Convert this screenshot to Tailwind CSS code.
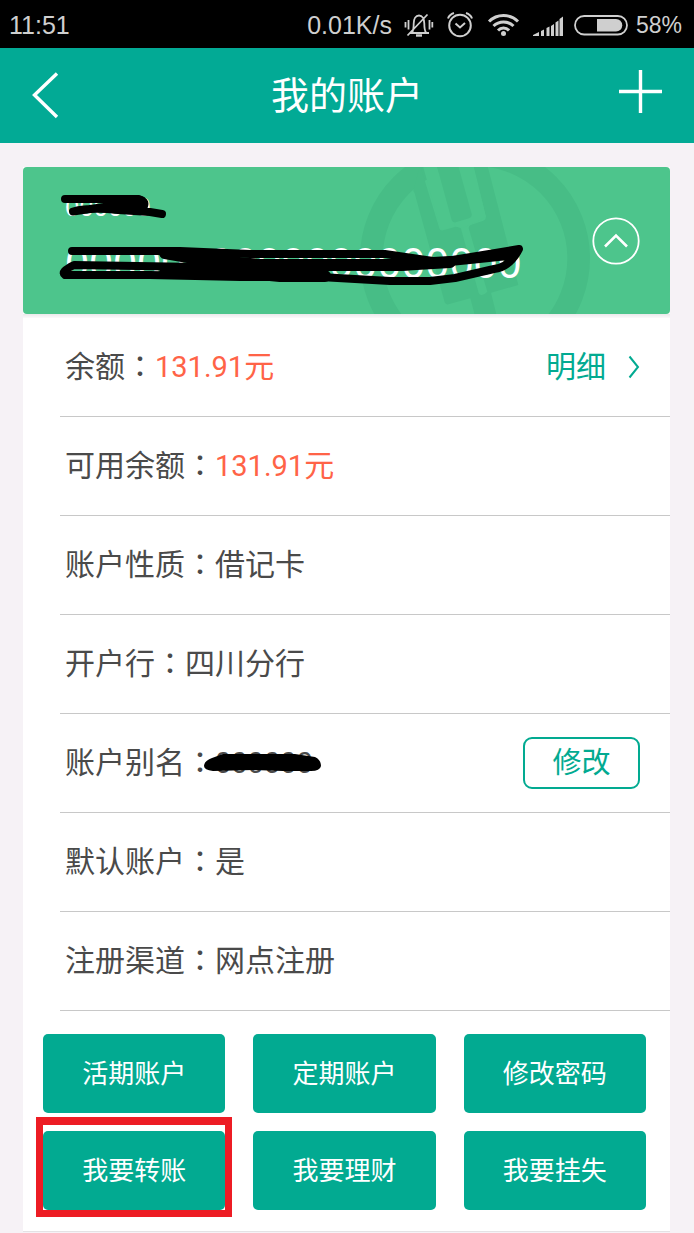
<!DOCTYPE html>
<html lang="zh-CN">
<head>
<meta charset="utf-8">
<meta name="viewport" content="width=device-width, initial-scale=1">
<title>我的账户</title>
<script src="https://cdn.jsdelivr.net/npm/@tailwindcss/browser@4"></script>
</head>
<body class="min-h-screen bg-[#f6f2f6] font-['Roboto','Noto_Sans_CJK_SC',sans-serif] text-[#4a4a4a]">

<!-- Status bar -->
<div class="flex h-12 items-center bg-black pr-3 pl-[9px] pt-[2px] font-['Liberation_Sans',sans-serif] text-[25px] leading-none text-[#cfcfcf]">
  <span class="flex-1">11:51</span>
  <span>0.01K/s</span>
  <svg class="ml-3 h-7 w-[30px]" viewBox="405 10 30 28" fill="none" stroke="#cfcfcf" stroke-width="1.8" aria-hidden="true">
    <path d="M410.500 32h19.500M413 31.500c1.500-2 1.700-5 1.700-9 0-4.500 2-8 5.300-8 3.300 0 5.300 3.500 5.300 8 0 4 .2 7 1.700 9M408.500 34.500L428.500 13.500"/>
    <path d="M406.500 21v5.500M409.500 19v9.500M430.500 19v9.500M433.300 21v5.500"/>
    <path d="M417 34.500h6" stroke-width="2.400"/>
  </svg>
  <svg class="ml-3 h-7 w-7" viewBox="446 10 28 28" fill="none" stroke="#cfcfcf" stroke-width="2" aria-hidden="true">
    <circle cx="460" cy="24.500" r="10.800"/>
    <path d="M455.500 22.500l4.500 4 5-4.500M448 17.500c1-3 3-4.500 6-5.500M472 17.500c-1-3-3-4.500-6-5.500"/>
  </svg>
  <svg class="ml-3 h-7 w-[34px]" viewBox="486 10 34 28" fill="none" stroke="#cfcfcf" stroke-width="3" aria-hidden="true">
    <path d="M489 20.500c8-8 21-8 29 0M493.500 25c5.500-5.500 14.500-5.500 20 0M498 29.500c3-3.200 8-3.200 11 0"/>
    <circle cx="503.500" cy="32.500" r="2.500" fill="#cfcfcf" stroke="none"/>
  </svg>
  <svg class="ml-3 h-7 w-8" viewBox="532 10 32 28" fill="#cfcfcf" aria-hidden="true">
    <path d="M533 35v-1l6-3v4zM541 35v-5l3-1.500v6.500zM546.500 35v-8l3-1.500v9.500zM551 35v-10l3-2v12zM555.500 35v-13.500l3-2v15.500zM559.500 35v-17l3.500-2.500v19.500z"/>
  </svg>
  <svg class="ml-2 h-7 w-14" viewBox="572 10 56 28" aria-hidden="true">
    <rect x="575" y="15" width="52" height="18.500" rx="9.200" fill="none" stroke="#cfcfcf" stroke-width="1.800"/>
    <path d="M597 18h19a6.200 6.200 0 0 1 0 12.500h-19z" fill="#cfcfcf"/>
  </svg>
  <span class="ml-2 text-[23px]">58%</span>
</div>

<!-- Title bar -->
<header class="flex h-[95px] items-center bg-[#02aa95] pr-8 pl-8">
  <div class="flex flex-1">
    <button type="button" aria-label="返回">
      <svg class="block h-12 w-7" viewBox="0 0 28 48" fill="none" stroke="#fff" stroke-width="3.400"><path d="M25 1.500L2.500 23 25 45"/></svg>
    </button>
  </div>
  <h1 class="text-[38px] leading-none text-white">我的账户</h1>
  <div class="flex flex-1 justify-end">
    <button type="button" aria-label="添加" class="pb-2">
      <svg class="block h-[43px] w-[43px]" viewBox="0 0 43 43" fill="none" stroke="#fff" stroke-width="3.400"><path d="M21.500 0v43M0 21.500h43"/></svg>
    </button>
  </div>
</header>

<main class="mt-6 mr-6 ml-[23px] border-b border-[#e4e2e4] bg-white">

  <!-- Card summary -->
  <section class="relative flex h-[147px] items-center overflow-hidden rounded-[4px] bg-[#4dc58c] pr-[30px] pl-[42px] text-white">
    <svg class="absolute top-0 right-0 h-[147px] w-[330px]" viewBox="-180 6 990 441" fill="#47bd86" aria-hidden="true">
      <circle cx="225" cy="280" r="311" fill="none" stroke="#47bd86" stroke-width="68"/>
      <path d="M40 78L60 0 118 190Q121 199 130 196L172 184Q180 183 183 191L236 384Q240 392 248 389L255 386 262 380 207 193Q204 184 212 180L250 167Q260 163 257 153L218 0H262L355 360 273 383 292 460H227L211 400 145 418Q137 420 134 412L44 85z"/>
      <path d="M68 0H110L165 185 122 195z" fill="#4dc58c"/>
      <path d="M174 0H220L258 155 212 180 183 190 165 184z" fill="#4dc58c"/>
      <path d="M110 0L155 165Q158 174 167 172L207 160Q217 156 215 147L174 0z"/>
    </svg>
    <div class="relative min-w-0 flex-1 pb-1 font-['Noto_Sans',sans-serif]">
      <p class="text-[25px] leading-[30px]">000000</p>
      <p class="mt-4 text-[42px] leading-[50px] whitespace-nowrap">0000000000000000000</p>
    </div>
    <!-- Strokes hiding the private numbers -->
    <svg class="absolute top-0 left-0 h-[147px] w-[510px]" viewBox="23 167 510 147" fill="none" stroke="#000" stroke-width="8" stroke-linecap="round" stroke-linejoin="round" aria-hidden="true">
      <path d="M65 199H139Q146 201 144 206L130 209 118 205 73 211.500Q90 207 118 210L150 212 162 214"/>
      <path d="M112 205L140 203" stroke-width="14"/>
      <path d="M72 251H180L250 254H385L440 262 519 249Q510 267 494 269L455 278 430 281H390L320 277H240L150 275H65Q60 272 74 265L200 267H400L470 260 508 256"/>
      <path d="M165 253L205 260 260 265H400L450 262M165 273L240 272 280 276H325" stroke-width="12"/>
    </svg>
    <button type="button" aria-label="收起" class="relative">
      <svg class="block h-12 w-12" viewBox="0 0 48 48" fill="none" stroke="#fff"><circle cx="24" cy="24" r="22.700" stroke-width="1.800"/><path d="M13 29.500L24 18.500 35 29.500" stroke-width="2.600"/></svg>
    </button>
  </section>
  <div class="h-1 bg-gradient-to-b from-[#ebe9eb] to-[#fbfafb]"></div>

  <!-- Account details -->
  <dl class="ml-[37px] text-[30px] leading-[40px]">
    <div class="flex h-[99px] items-center border-b border-[#c8c8c8] pr-[30px] pl-[5px]">
      <dt>余额<span class="font-['Noto_Sans_CJK_TC',sans-serif] leading-none" lang="zh-TW">：</span></dt>
      <dd class="flex-1 text-[#ff6347]"><span class="text-[29px]">131.91</span>元</dd>
      <dd><a href="#" class="flex items-center gap-[22px] text-[#02aa91]">明细
        <svg class="h-6 w-3" viewBox="0 0 12 24" fill="none" stroke="#02aa91" stroke-width="2" aria-hidden="true"><path d="M1.500 1.500L10 12 1.500 22.500"/></svg></a></dd>
    </div>
    <div class="flex h-[99px] items-center border-b border-[#c8c8c8] pr-[30px] pl-[5px]">
      <dt>可用余额<span class="font-['Noto_Sans_CJK_TC',sans-serif] leading-none" lang="zh-TW">：</span></dt>
      <dd class="flex-1 text-[#ff6347]"><span class="text-[29px]">131.91</span>元</dd>
    </div>
    <div class="flex h-[99px] items-center border-b border-[#c8c8c8] pr-[30px] pl-[5px]">
      <dt>账户性质<span class="font-['Noto_Sans_CJK_TC',sans-serif] leading-none" lang="zh-TW">：</span></dt>
      <dd>借记卡</dd>
    </div>
    <div class="flex h-[99px] items-center border-b border-[#c8c8c8] pr-[30px] pl-[5px]">
      <dt>开户行<span class="font-['Noto_Sans_CJK_TC',sans-serif] leading-none" lang="zh-TW">：</span></dt>
      <dd>四川分行</dd>
    </div>
    <div class="flex h-[99px] items-center border-b border-[#c8c8c8] pr-[30px] pl-[5px]">
      <dt>账户别名<span class="font-['Noto_Sans_CJK_TC',sans-serif] leading-none" lang="zh-TW">：</span></dt>
      <dd class="relative flex-1 text-[29px]">000000
        <svg class="absolute top-2 -left-3 h-6 w-[120px]" viewBox="0 0 120 24" aria-hidden="true"><path d="M1 15Q1 10 9 7L20 3H92L112 6Q118 9 118 15 117 20 108 20H80L50 19 10 20Q1 19 1 15z"/></svg>
      </dd>
      <dd class="flex"><button type="button" class="h-[52px] w-[117px] rounded-[9px] border-2 border-[#02aa91] text-[29px] leading-none text-[#02aa91]">修改</button></dd>
    </div>
    <div class="flex h-[99px] items-center border-b border-[#c8c8c8] pr-[30px] pl-[5px]">
      <dt>默认账户<span class="font-['Noto_Sans_CJK_TC',sans-serif] leading-none" lang="zh-TW">：</span></dt>
      <dd>是</dd>
    </div>
    <div class="flex h-[99px] items-center border-b border-[#c8c8c8] pr-[30px] pl-[5px]">
      <dt>注册渠道<span class="font-['Noto_Sans_CJK_TC',sans-serif] leading-none" lang="zh-TW">：</span></dt>
      <dd>网点注册</dd>
    </div>
  </dl>

  <!-- Actions -->
  <div class="grid grid-cols-3 gap-x-7 gap-y-[18px] pt-[23px] pr-6 pb-[21px] pl-5 text-[26px] leading-none text-white">
    <button type="button" class="h-[79px] rounded-[5px] bg-[#02aa91]">活期账户</button>
    <button type="button" class="h-[79px] rounded-[5px] bg-[#02aa91]">定期账户</button>
    <button type="button" class="h-[79px] rounded-[5px] bg-[#02aa91]">修改密码</button>
    <div class="relative flex">
      <button type="button" class="h-[79px] flex-1 rounded-[5px] bg-[#02aa91]">我要转账</button>
      <span class="pointer-events-none absolute -inset-x-[7px] -top-[14px] -bottom-[7px] border-[7px] border-t-8 border-[#ed1c24]"></span>
    </div>
    <button type="button" class="h-[79px] rounded-[5px] bg-[#02aa91]">我要理财</button>
    <button type="button" class="h-[79px] rounded-[5px] bg-[#02aa91]">我要挂失</button>
  </div>
</main>
</body>
</html>
